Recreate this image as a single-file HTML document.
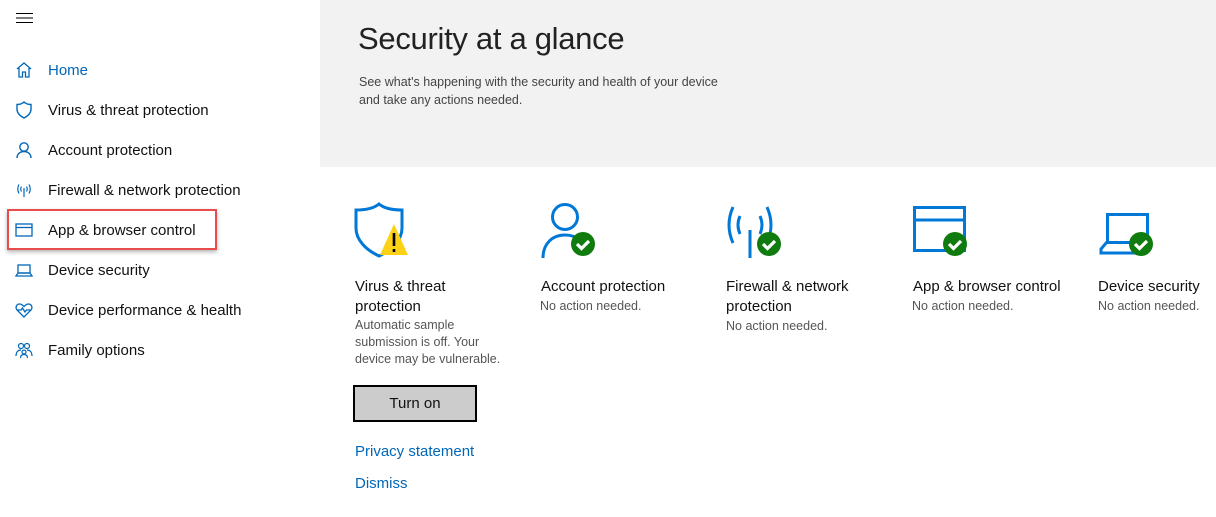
<!DOCTYPE html>
<html><head><meta charset="utf-8"><style>
*{margin:0;padding:0;box-sizing:border-box}
body{width:1216px;height:517px;background:#fff;font-family:"Liberation Sans",sans-serif;position:relative;overflow:hidden;color:#000}
.a{position:absolute}
.nav{left:48px;font-size:15px;white-space:nowrap;color:#111}
.ic{left:14px;width:20px;height:20px}
.hdr{left:320px;top:0;width:896px;height:167px;background:#f2f2f2}
.t{font-size:15px;line-height:20px;color:#111}
.s{font-size:12.5px;line-height:17px;color:#555}
.lnk{color:#0067b8;font-size:15px}
</style></head><body>
<svg class="a" style="left:16px;top:12px" width="17" height="12"><path d="M0 1.5H17M0 6H17M0 10.5H17" stroke="#000" stroke-width="1"/></svg>

<svg class="a ic" style="top:60px" viewBox="0 0 20 20" fill="none" stroke="#0067b8" stroke-width="1.3"><path d="M3 9L10 3L17 9M5 8V17H8.5V12H11.5V17H15V8"/></svg>
<div class="a nav" style="top:62px;color:#0067b8">Home</div>
<svg class="a ic" style="top:100px" viewBox="0 0 20 20" fill="none" stroke="#0067b8" stroke-width="1.4"><path d="M10 2C8 4 5 4.5 3 4.5V9C3 13 6 16 10 18C14 16 17 13 17 9V4.5C15 4.5 12 4 10 2Z"/></svg>
<div class="a nav" style="top:102px">Virus &amp; threat protection</div>
<svg class="a ic" style="top:140px" viewBox="0 0 20 20" fill="none" stroke="#0067b8" stroke-width="1.4"><circle cx="10" cy="7" r="4.2"/><path d="M3 18C3 14 6 11.5 10 11.5S17 14 17 18"/></svg>
<div class="a nav" style="top:142px">Account protection</div>
<svg class="a ic" style="top:180px" viewBox="0 0 20 20" fill="none" stroke="#0067b8" stroke-width="1.2"><path d="M10 8V17M7.5 6.5Q6 9 7.5 11.5M12.5 6.5Q14 9 12.5 11.5M5 4.5Q2.5 9 5 13.5M15 4.5Q17.5 9 15 13.5"/></svg>
<div class="a nav" style="top:182px">Firewall &amp; network protection</div>
<div class="a" style="left:7px;top:209px;width:210px;height:41px;border:2px solid #e84c4c;box-shadow:0 2px 4px rgba(0,0,0,.3)"></div>
<svg class="a ic" style="top:220px" viewBox="0 0 20 20" fill="none" stroke="#0067b8" stroke-width="1.3"><rect x="2" y="4" width="16" height="12"/><path d="M2 7.5H18"/></svg>
<div class="a nav" style="top:222px">App &amp; browser control</div>
<svg class="a ic" style="top:260px" viewBox="0 0 20 20" fill="none" stroke="#0067b8" stroke-width="1.3"><rect x="4" y="5" width="12" height="8"/><path d="M2 16H18L16 13H4Z"/></svg>
<div class="a nav" style="top:262px">Device security</div>
<svg class="a ic" style="top:300px" viewBox="0 0 20 20" fill="none" stroke="#0067b8" stroke-width="1.3"><path d="M10 17L3 10C1 7.5 2.5 4 5.5 4C7.5 4 9 5.5 10 6.5C11 5.5 12.5 4 14.5 4C17.5 4 19 7.5 17 10Z"/><path d="M3 10H7L8.5 8L11 12L12.5 10H17"/></svg>
<div class="a nav" style="top:302px">Device performance &amp; health</div>
<svg class="a ic" style="top:340px" viewBox="0 0 20 20" fill="none" stroke="#0067b8" stroke-width="1.2"><circle cx="7" cy="6" r="2.5"/><circle cx="13" cy="6" r="2.5"/><circle cx="10" cy="12" r="2"/><path d="M2 16C2 12 4 10 7 10M18 16C18 12 16 10 13 10M6.5 18C6.5 15.5 8 14.5 10 14.5S13.5 15.5 13.5 18"/></svg>
<div class="a nav" style="top:342px">Family options</div>

<div class="a hdr"></div>
<div class="a" style="left:358px;top:21px;font-size:31px;color:#222;letter-spacing:-0.3px">Security at a glance</div>
<div class="a s" style="left:359px;top:73px;line-height:18px;color:#444">See what's happening with the security and health of your device<br>and take any actions needed.</div>

<svg class="a" style="left:352px;top:202px" width="60" height="56" viewBox="0 0 60 56"><path d="M27 2C21 7 12 8 4 8V26C4 38 14 48 27 54C40 48 50 38 50 26V8C42 8 33 7 27 2Z" fill="none" stroke="#0078d7" stroke-width="3"/><path d="M42 22L56 53H28Z" fill="#fcd116"/><path d="M42 31V44M42 47V50" stroke="#000" stroke-width="2.6"/></svg>
<svg class="a" style="left:540px;top:202px" width="60" height="56" viewBox="0 0 60 56"><circle cx="25" cy="15" r="12.5" fill="none" stroke="#0078d7" stroke-width="3"/><path d="M3 56C3 42 12 33 25 33C31 33 36 35 39 38" fill="none" stroke="#0078d7" stroke-width="3"/><circle cx="43" cy="42" r="12" fill="#107c10"/><path d="M37 42L41.5 46.5L49 39" fill="none" stroke="#fff" stroke-width="3.2"/></svg>
<svg class="a" style="left:725px;top:202px" width="60" height="56" viewBox="0 0 60 56"><path d="M25 28V56" stroke="#0078d7" stroke-width="3"/><path d="M15 14Q11 23 15 32M35 14Q39 23 35 32M8 5Q0 23 8 41M42 5Q50 23 42 41" fill="none" stroke="#0078d7" stroke-width="3"/><circle cx="44" cy="42" r="12" fill="#107c10"/><path d="M38 42L42.5 46.5L50 39" fill="none" stroke="#fff" stroke-width="3.2"/></svg>
<svg class="a" style="left:912px;top:202px" width="60" height="56" viewBox="0 0 60 56"><rect x="2.5" y="5.5" width="50" height="43" fill="none" stroke="#0078d7" stroke-width="3"/><path d="M2 18H53" stroke="#0078d7" stroke-width="3"/><circle cx="43" cy="42" r="12" fill="#107c10"/><path d="M37 42L41.5 46.5L49 39" fill="none" stroke="#fff" stroke-width="3.2"/></svg>
<svg class="a" style="left:1098px;top:202px" width="60" height="56" viewBox="0 0 60 56"><rect x="9.5" y="12.5" width="40" height="28" fill="none" stroke="#0078d7" stroke-width="3"/><path d="M9 40L3 47V51H44" fill="none" stroke="#0078d7" stroke-width="3"/><circle cx="43" cy="42" r="12" fill="#107c10"/><path d="M37 42L41.5 46.5L49 39" fill="none" stroke="#fff" stroke-width="3.2"/></svg>

<div class="a t" style="left:355px;top:277px">Virus &amp; threat<br>protection</div>
<div class="a s" style="left:355px;top:317px">Automatic sample<br>submission is off. Your<br>device may be vulnerable.</div>
<div class="a" style="left:353px;top:385px;width:124px;height:37px;border:2px solid #000;background:#ccc;font-size:15px;text-align:center;line-height:33px;color:#111">Turn on</div>
<div class="a lnk" style="left:355px;top:443px">Privacy statement</div>
<div class="a lnk" style="left:355px;top:475px">Dismiss</div>

<div class="a t" style="left:541px;top:277px">Account protection</div>
<div class="a s" style="left:540px;top:298px">No action needed.</div>
<div class="a t" style="left:726px;top:277px">Firewall &amp; network<br>protection</div>
<div class="a s" style="left:726px;top:318px">No action needed.</div>
<div class="a t" style="left:913px;top:277px">App &amp; browser control</div>
<div class="a s" style="left:912px;top:298px">No action needed.</div>
<div class="a t" style="left:1098px;top:277px">Device security</div>
<div class="a s" style="left:1098px;top:298px">No action needed.</div>
</body></html>
